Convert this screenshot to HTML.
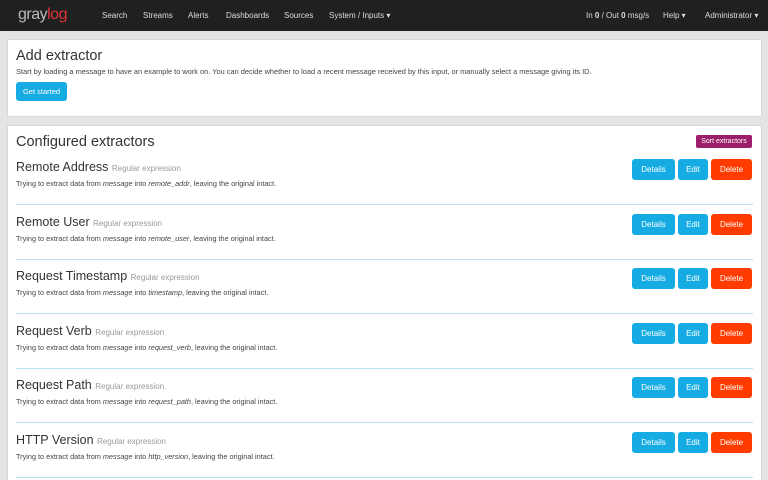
<!DOCTYPE html>
<html><head><meta charset="utf-8"><style>
*{box-sizing:border-box;margin:0;padding:0}
html,body{width:768px;height:480px;overflow:hidden}
body{background:#e4e4e4;font-family:"Liberation Sans",sans-serif;color:#333;position:relative}
.nav{position:absolute;left:0;top:0;width:768px;height:31px;background:#202020;color:#ddd;font-size:8px}
.nav span{position:absolute;top:11px}
.logo{position:absolute;left:18px;top:6px;font-size:16px;color:#bbb;letter-spacing:-0.5px}
.logo b{color:#e0343b;font-weight:normal}
.panel{position:absolute;left:7px;width:755px;background:#fff;border:1px solid #d8d8d8}
h1{position:absolute;font-weight:normal;font-size:14.5px;color:#333}
.p{position:absolute;font-size:7.4px;color:#444;white-space:nowrap}
.btn{position:absolute;height:21px;border-radius:3px;color:#fff;font-size:8px;text-align:center;line-height:21px}
.b1{background:#16ace3}.b2{background:#ff3b00}
.row{position:absolute;left:0;width:755px;height:55px}
.row h2{position:absolute;left:8px;top:0;font-weight:normal;font-size:12.5px;color:#333}
.row h2 small{font-size:8px;color:#999}
.row .d{position:absolute;left:8px;top:19px;font-size:7.3px;color:#444;white-space:nowrap}
.row hr{position:absolute;left:8px;top:44px;width:737px;border:0;border-top:1px solid #b6e2f5}
</style></head><body>
<div class="nav">
<div class="logo">gray<b>log</b></div>
<span style="left:102px">Search</span><span style="left:143px">Streams</span><span style="left:188px">Alerts</span><span style="left:226px">Dashboards</span><span style="left:284px">Sources</span><span style="left:329px">System / Inputs ▾</span>
<span style="left:586px">In <b>0</b> / Out <b>0</b> msg/s</span><span style="left:663px">Help ▾</span><span style="left:705px">Administrator ▾</span>
</div>
<div class="panel" style="top:39px;height:78px">
<h1 style="left:8px;top:8px">Add extractor</h1>
<div class="p" style="left:8px;top:27px">Start by loading a message to have an example to work on. You can decide whether to load a recent message received by this input, or manually select a message giving its ID.</div>
<div class="btn b1" style="left:8px;top:42px;width:51px;height:19px;line-height:19px;font-size:7.5px">Get started</div>
</div>
<div class="panel" style="top:125px;height:360px">
<h1 style="left:8px;top:8px">Configured extractors</h1>
<div class="btn" style="left:688px;top:9px;width:56px;height:13px;line-height:13px;font-size:7px;background:#9c1e6a;border-radius:2px">Sort extractors</div>
<div class="row" style="top:34px"><h2>Remote Address <small>Regular expression</small></h2><div class="d">Trying to extract data from <i>message</i> into <i>remote_addr</i>, leaving the original intact.</div><hr></div>
<div class="row" style="top:88.5px"><h2>Remote User <small>Regular expression</small></h2><div class="d">Trying to extract data from <i>message</i> into <i>remote_user</i>, leaving the original intact.</div><hr></div>
<div class="row" style="top:143px"><h2>Request Timestamp <small>Regular expression</small></h2><div class="d">Trying to extract data from <i>message</i> into <i>timestamp</i>, leaving the original intact.</div><hr></div>
<div class="row" style="top:197.5px"><h2>Request Verb <small>Regular expression</small></h2><div class="d">Trying to extract data from <i>message</i> into <i>request_verb</i>, leaving the original intact.</div><hr></div>
<div class="row" style="top:252px"><h2>Request Path <small>Regular expression</small></h2><div class="d">Trying to extract data from <i>message</i> into <i>request_path</i>, leaving the original intact.</div><hr></div>
<div class="row" style="top:306.5px"><h2>HTTP Version <small>Regular expression</small></h2><div class="d">Trying to extract data from <i>message</i> into <i>http_version</i>, leaving the original intact.</div><hr></div>
</div>
<div class="btn b1" style="left:632px;top:159px;width:43px">Details</div><div class="btn b1" style="left:678px;top:159px;width:30px">Edit</div><div class="btn b2" style="left:711px;top:159px;width:41px">Delete</div>
<div class="btn b1" style="left:632px;top:213.5px;width:43px">Details</div><div class="btn b1" style="left:678px;top:213.5px;width:30px">Edit</div><div class="btn b2" style="left:711px;top:213.5px;width:41px">Delete</div>
<div class="btn b1" style="left:632px;top:268px;width:43px">Details</div><div class="btn b1" style="left:678px;top:268px;width:30px">Edit</div><div class="btn b2" style="left:711px;top:268px;width:41px">Delete</div>
<div class="btn b1" style="left:632px;top:322.5px;width:43px">Details</div><div class="btn b1" style="left:678px;top:322.5px;width:30px">Edit</div><div class="btn b2" style="left:711px;top:322.5px;width:41px">Delete</div>
<div class="btn b1" style="left:632px;top:377px;width:43px">Details</div><div class="btn b1" style="left:678px;top:377px;width:30px">Edit</div><div class="btn b2" style="left:711px;top:377px;width:41px">Delete</div>
<div class="btn b1" style="left:632px;top:431.5px;width:43px">Details</div><div class="btn b1" style="left:678px;top:431.5px;width:30px">Edit</div><div class="btn b2" style="left:711px;top:431.5px;width:41px">Delete</div>
</body></html>
